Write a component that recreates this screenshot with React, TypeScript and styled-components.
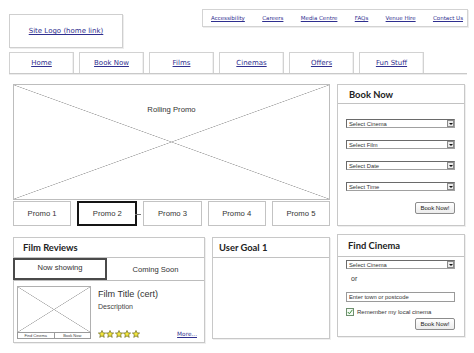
import React from "react";
import styled, { createGlobalStyle, css } from "styled-components";

const Global = createGlobalStyle`
  html, body { margin: 0; padding: 0; background: #fff; }
  body { width: 474px; height: 353px; overflow: hidden; font-family: "DejaVu Sans", Verdana, sans-serif; }
  * { box-sizing: border-box; }
`;

const xCross = css`
  background:
    linear-gradient(to top right, transparent calc(50% - 0.6px), #a8a8a8 50%, transparent calc(50% + 0.6px)),
    linear-gradient(to bottom right, transparent calc(50% - 0.6px), #a8a8a8 50%, transparent calc(50% + 0.6px)),
    #fff;
`;

const Page = styled.div`
  width: 474px;
  height: 353px;
  padding: 9px 6px 0 9px;
  overflow: hidden;
`;

const Header = styled.header`
  display: flex;
  justify-content: space-between;
  align-items: flex-start;
`;

const Link = styled.a<{ $size?: number }>`
  color: #2f2f8f;
  text-decoration: underline;
  font-family: "DejaVu Sans", Verdana, sans-serif;
  font-size: ${(p) => p.$size ?? 7}px;
  white-space: nowrap;
  cursor: pointer;
`;

const Logo = styled.div`
  margin-top: 5px;
  width: 114px;
  height: 34px;
  border: 1px solid #cfcfcf;
  box-shadow: 1px 1px 0 #ededed;
  display: flex;
  align-items: center;
  justify-content: center;
`;

const UtilNav = styled.nav`
  width: 266px;
  height: 18px;
  border: 1px solid #d3d3d3;
  box-shadow: 1px 1px 0 #ededed;
  display: flex;
  align-items: center;
  justify-content: space-between;
  padding: 0 4px 0 8px;
`;

const MainNav = styled.nav`
  margin-top: 4px;
  width: 458px;
  display: flex;
  gap: 5px;
  border-bottom: 1px solid #c9c9c9;
  box-shadow: 0 1px 0 #ececec;
`;

const NavTab = styled.div`
  width: 65px;
  height: 21px;
  border: 1px solid #d2d2d2;
  border-bottom: none;
  box-shadow: inset -1px 0 0 #f0f0f0;
  display: flex;
  align-items: center;
  justify-content: center;
`;

const Content = styled.main`
  margin: 10px 0 0 4px;
  display: grid;
  grid-template-columns: 192px 118px 128px;
  grid-template-rows: 142px auto;
  column-gap: 7px;
  row-gap: 8px;
  align-items: start;
`;

const Promo = styled.section`
  grid-column: 1 / span 2;
  display: flex;
  flex-direction: column;
`;

const PromoImage = styled.div`
  height: 116px;
  border: 1px solid #bdbdbd;
  ${xCross};
  display: flex;
  justify-content: center;
  padding-top: 20px;
  font-family: "Liberation Sans", Arial, sans-serif;
  font-size: 7.7px;
  color: #333;
`;

const PromoTabs = styled.div`
  margin-top: 1px;
  display: flex;
  gap: 6px;
`;

const PromoTab = styled.div<{ $active?: boolean }>`
  position: relative;
  flex: 1;
  height: 25px;
  border: 1px solid #c3c3c3;
  display: flex;
  align-items: center;
  justify-content: center;
  font-family: "Liberation Sans", Arial, sans-serif;
  font-size: 7.7px;
  color: #333;
  ${(p) =>
    p.$active &&
    css`
      border: 2px solid #151515;
      &::after {
        content: "";
        position: absolute;
        left: 100%;
        top: 50%;
        width: 6px;
        height: 1px;
        background: #777;
      }
    `}
`;

const Panel = styled.section<{ $height: number; $offset?: number }>`
  height: ${(p) => p.$height}px;
  margin-top: ${(p) => p.$offset ?? 0}px;
  border: 1px solid #c8c8c8;
  box-shadow: 1px 1px 0 #efefef;
  display: flex;
  flex-direction: column;
  background: #fff;
`;

const PanelHead = styled.h2<{ $h?: number; $pad?: number }>`
  margin: 0;
  height: ${(p) => p.$h ?? 19}px;
  flex: none;
  border-bottom: 1px solid #c2c2c2;
  padding-left: ${(p) => p.$pad ?? 10}px;
  display: flex;
  align-items: center;
  font-family: Lato, "Open Sans", sans-serif;
  font-weight: 700;
  font-size: 9.4px;
  color: #222;
`;

const FormBody = styled.div<{ $pad: string; $gap: number }>`
  padding: ${(p) => p.$pad};
  display: flex;
  flex-direction: column;
  gap: ${(p) => p.$gap}px;
`;

const SelectBox = styled.div`
  height: 9px;
  border: 1px solid #a0a0a0;
  border-top-color: #6a6a6a;
  border-left-color: #6a6a6a;
  display: flex;
  align-items: center;
  justify-content: space-between;
  padding-left: 2px;
  font-family: "Liberation Sans", Arial, sans-serif;
  font-size: 5.8px;
  color: #333;
  background: #fff;
`;

const Arrow = styled.span`
  width: 7px;
  height: 7px;
  border: 1px solid #8a8a8a;
  background: #eaeaea;
  display: flex;
  align-items: center;
  justify-content: center;
  &::before {
    content: "";
    border-left: 2px solid transparent;
    border-right: 2px solid transparent;
    border-top: 2px solid #111;
  }
`;

const Button = styled.button<{ $top?: number }>`
  align-self: flex-end;
  margin-top: ${(p) => p.$top ?? 0}px;
  width: 40px;
  height: 12px;
  padding: 0;
  border: 1px solid #8c8c8c;
  border-radius: 2px;
  background: linear-gradient(#fff, #ececec);
  font-family: "Liberation Sans", Arial, sans-serif;
  font-size: 6px;
  color: #222;
`;

const OrText = styled.div`
  margin: 6px 0 0 5px;
  font-family: "Liberation Sans", Arial, sans-serif;
  font-size: 7px;
  color: #333;
  height: 8px;
`;

const TextInput = styled.div`
  margin-top: 9px;
  height: 10px;
  border: 1px solid #9a9a9a;
  padding-left: 2px;
  display: flex;
  align-items: center;
  font-family: "Liberation Sans", Arial, sans-serif;
  font-size: 5.8px;
  color: #333;
`;

const CheckRow = styled.label`
  margin-top: 6px;
  display: flex;
  align-items: center;
  gap: 3px;
  font-family: "Liberation Sans", Arial, sans-serif;
  font-size: 6px;
  color: #333;
`;

const CheckBox = styled.span`
  width: 8px;
  height: 8px;
  border: 1px solid #6e8f6e;
  background: #f4fbf4;
  display: flex;
  align-items: center;
  justify-content: center;
`;

const TabsRow = styled.div`
  display: flex;
  height: 23px;
  border-bottom: 1px solid #bdbdbd;
  flex: none;
`;

const ReviewTab = styled.div<{ $active?: boolean }>`
  font-family: "Liberation Sans", Arial, sans-serif;
  font-size: 7.6px;
  color: #333;
  display: flex;
  justify-content: center;
  ${(p) =>
    p.$active
      ? css`
          width: 94px;
          margin-left: -1px;
          border: 2px solid #4a4a4a;
          padding-top: 3px;
        `
      : css`
          flex: 1;
          align-items: center;
          padding-top: 1px;
        `}
`;

const Card = styled.div`
  display: flex;
  gap: 7px;
  padding: 5px 7px 0 3px;
`;

const Thumb = styled.div`
  width: 74px;
  display: flex;
  flex-direction: column;
`;

const ThumbImage = styled.div`
  height: 46px;
  border: 1px solid #b0b0b0;
  border-bottom: none;
  ${xCross};
`;

const MiniRow = styled.div`
  display: flex;
  height: 7px;
`;

const MiniBtn = styled.div`
  flex: 1;
  border: 1px solid #9a9a9a;
  & + & { border-left: none; }
  display: flex;
  align-items: center;
  justify-content: center;
  font-family: "Liberation Sans", Arial, sans-serif;
  font-size: 4px;
  color: #444;
`;

const CardText = styled.div`
  flex: 1;
  display: flex;
  flex-direction: column;
  padding-top: 3px;
`;

const FilmTitle = styled.div`
  font-family: "Liberation Sans", Arial, sans-serif;
  font-size: 9.1px;
  color: #333;
`;

const Description = styled.div`
  margin-top: 4px;
  font-family: "Liberation Sans", Arial, sans-serif;
  font-size: 7px;
  color: #444;
`;

const RatingRow = styled.div`
  margin-top: auto;
  display: flex;
  align-items: center;
  justify-content: space-between;
  padding-bottom: 1px;
`;

const Stars = styled.div`
  display: flex;
  gap: 0.4px;
`;

const Star = () => (
  <svg width="8" height="8" viewBox="0 0 10 10">
    <polygon
      points="5,0.6 6.3,3.6 9.5,3.8 7,5.9 7.8,9.2 5,7.4 2.2,9.2 3,5.9 0.5,3.8 3.7,3.6"
      fill="#f2e63a"
      stroke="#6d6a1e"
      strokeWidth="0.9"
      strokeLinejoin="round"
    />
  </svg>
);

const Select = ({ label }: { label: string }) => (
  <SelectBox>
    <span>{label}</span>
    <Arrow />
  </SelectBox>
);

export default function App() {
  const util = ["Accessibility", "Careers", "Media Centre", "FAQs", "Venue Hire", "Contact Us"];
  const nav = ["Home", "Book Now", "Films", "Cinemas", "Offers", "Fun Stuff"];
  const promos = ["Promo 1", "Promo 2", "Promo 3", "Promo 4", "Promo 5"];
  return (
    <>
      <Global />
      <Page>
        <Header>
          <Logo>
            <Link $size={7}>Site Logo (home link)</Link>
          </Logo>
          <UtilNav>
            {util.map((u) => (
              <Link key={u} $size={5.5}>
                {u}
              </Link>
            ))}
          </UtilNav>
        </Header>
        <MainNav>
          {nav.map((n) => (
            <NavTab key={n}>
              <Link $size={7}>{n}</Link>
            </NavTab>
          ))}
        </MainNav>
        <Content>
          <Promo>
            <PromoImage>Rolling Promo</PromoImage>
            <PromoTabs>
              {promos.map((p, i) => (
                <PromoTab key={p} $active={i === 1}>
                  {p}
                </PromoTab>
              ))}
            </PromoTabs>
          </Promo>
          <Panel $height={142}>
            <PanelHead $h={19} $pad={11}>Book Now</PanelHead>
            <FormBody $pad="15px 9px 0 8px" $gap={12}>
              <Select label="Select Cinema" />
              <Select label="Select Film" />
              <Select label="Select Date" />
              <Select label="Select Time" />
              <Button $top={-1}>Book Now!</Button>
            </FormBody>
          </Panel>
          <Panel $height={106} $offset={3}>
            <PanelHead $h={20} $pad={9}>Film Reviews</PanelHead>
            <TabsRow>
              <ReviewTab $active>Now showing</ReviewTab>
              <ReviewTab>Coming Soon</ReviewTab>
            </TabsRow>
            <Card>
              <Thumb>
                <ThumbImage />
                <MiniRow>
                  <MiniBtn>Find Cinema</MiniBtn>
                  <MiniBtn>Book Now</MiniBtn>
                </MiniRow>
              </Thumb>
              <CardText>
                <FilmTitle>Film Title (cert)</FilmTitle>
                <Description>Description</Description>
                <RatingRow>
                  <Stars>
                    {[0, 1, 2, 3, 4].map((s) => (
                      <Star key={s} />
                    ))}
                  </Stars>
                  <Link $size={5.8}>More...</Link>
                </RatingRow>
              </CardText>
            </Card>
          </Panel>
          <Panel $height={102} $offset={3}>
            <PanelHead $h={20} $pad={6}>User Goal 1</PanelHead>
          </Panel>
          <Panel $height={103}>
            <PanelHead $h={22} $pad={10}>Find Cinema</PanelHead>
            <FormBody $pad="3px 9px 0 8px" $gap={0}>
              <Select label="Select Cinema" />
              <OrText>or</OrText>
              <TextInput>Enter town or postcode</TextInput>
              <CheckRow>
                <CheckBox>
                  <svg width="6" height="6" viewBox="0 0 6 6">
                    <polyline points="0.8,3 2.4,4.8 5.4,0.8" fill="none" stroke="#3d8a3d" strokeWidth="1" />
                  </svg>
                </CheckBox>
                Remember my local cinema
              </CheckRow>
              <Button $top={2}>Book Now!</Button>
            </FormBody>
          </Panel>
        </Content>
      </Page>
    </>
  );
}
